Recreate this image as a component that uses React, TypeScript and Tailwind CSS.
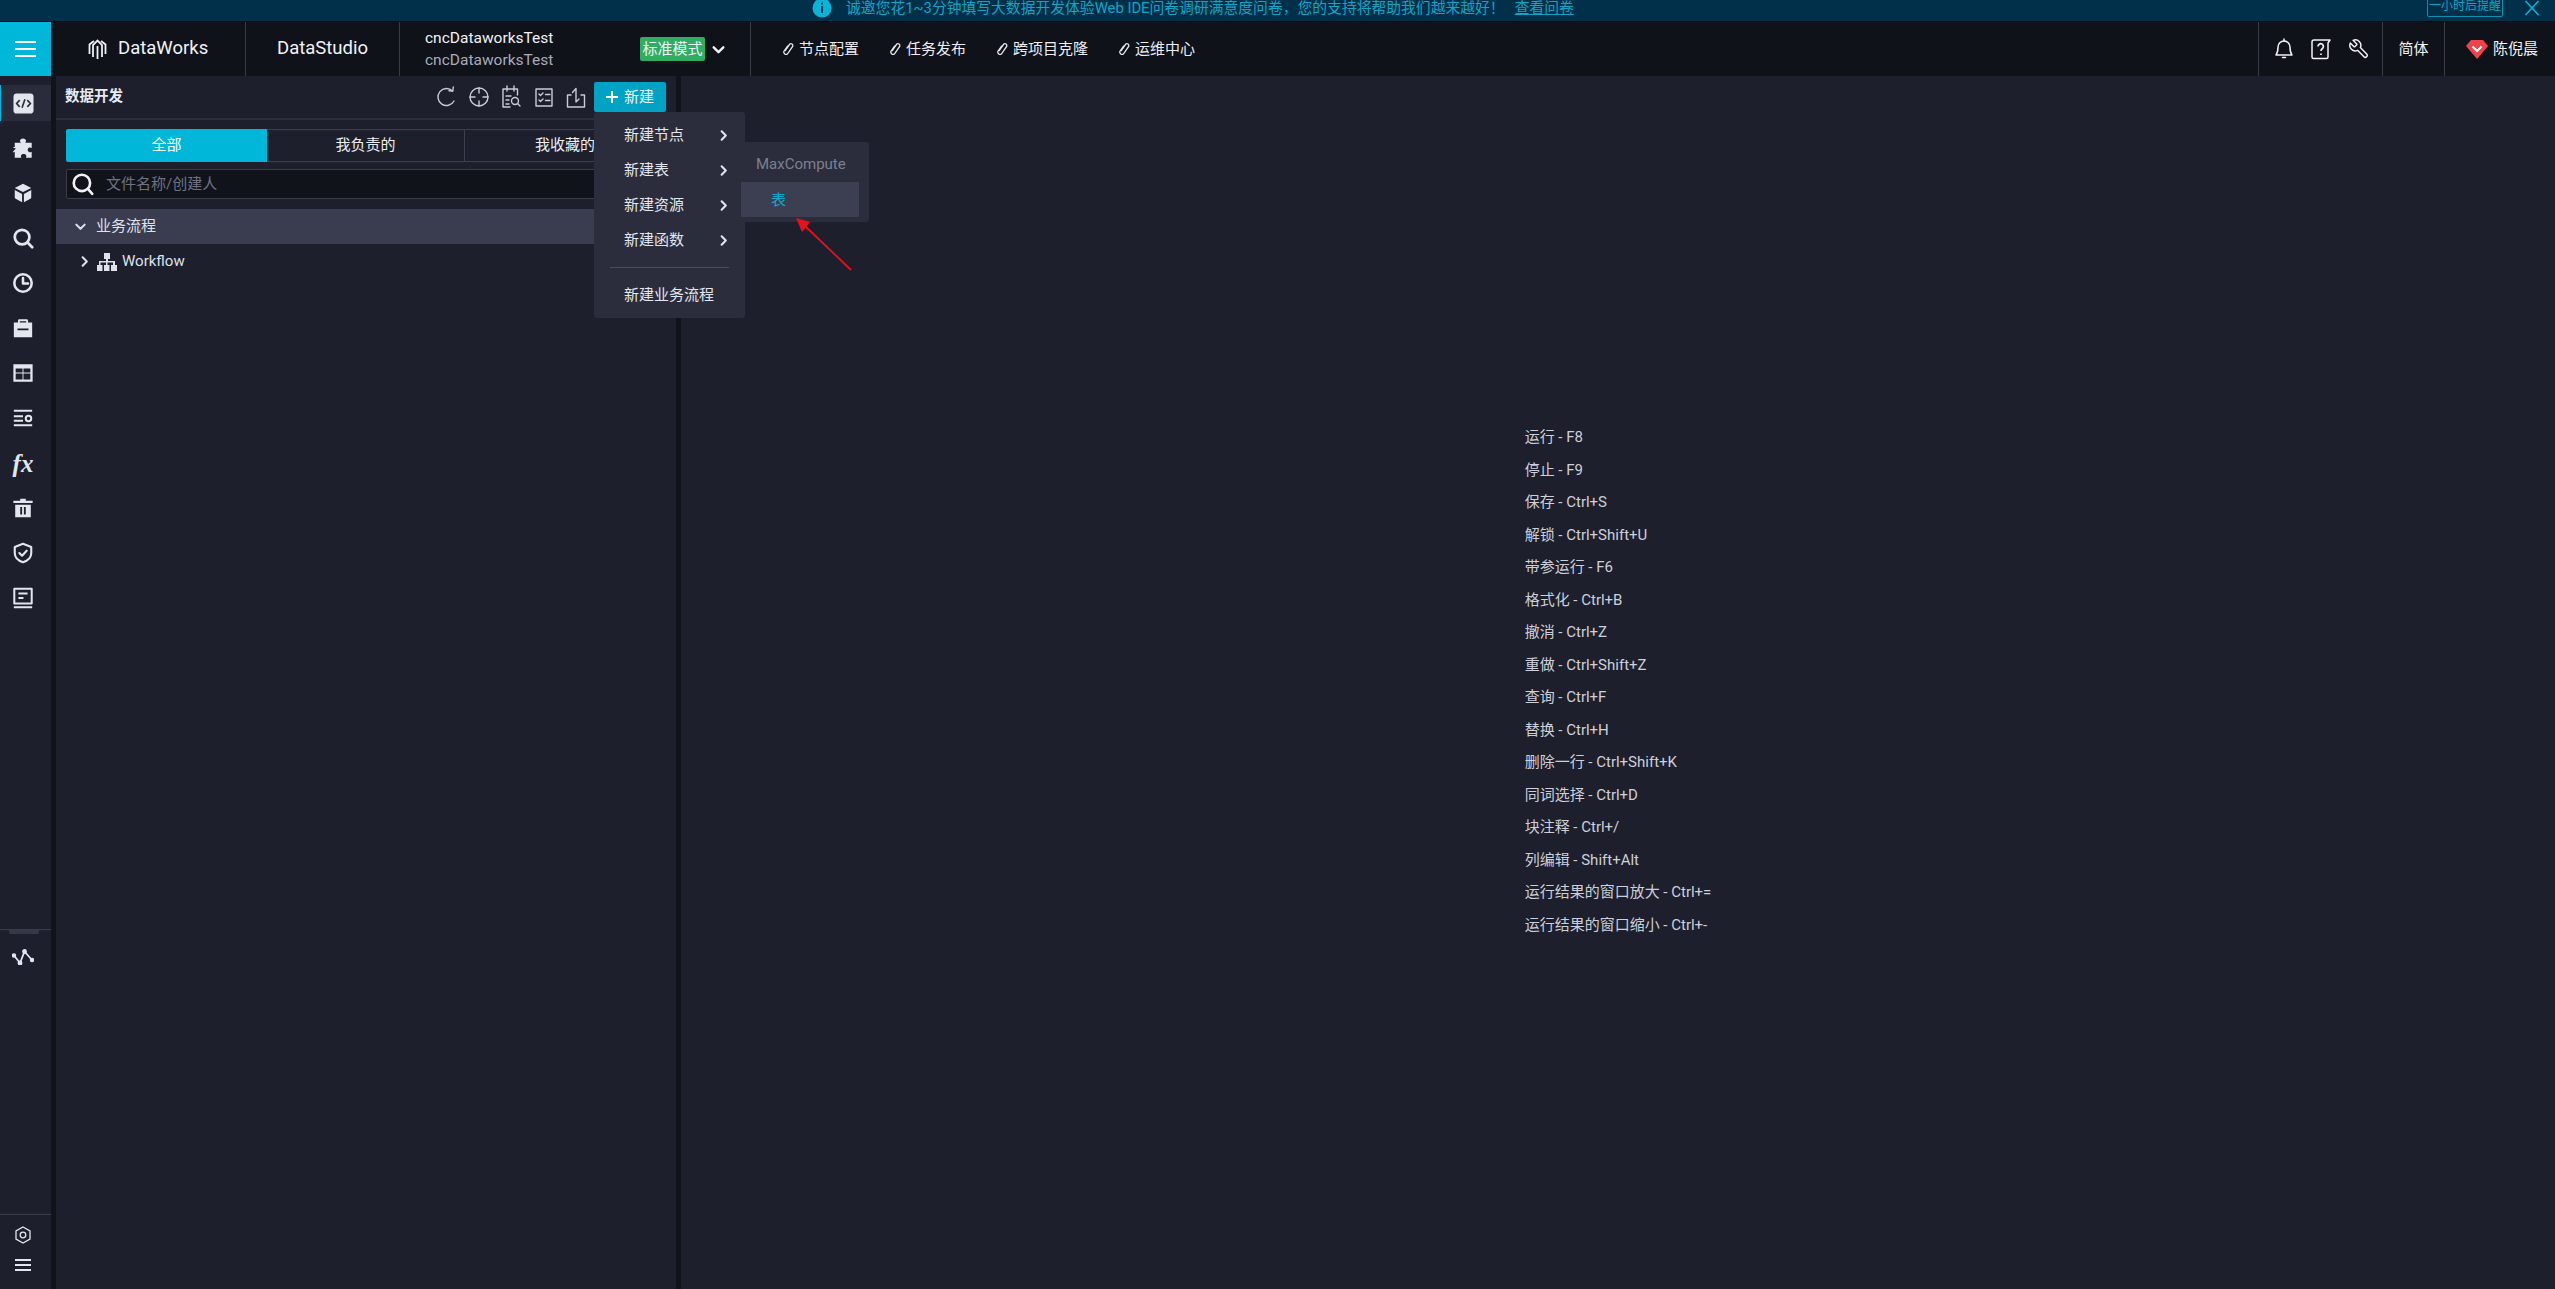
import React from "react";

const C = "#e3e6ee";

function Sb({ children, active }: { children: React.ReactNode; active?: boolean }) {
  return (
    <div className={active ? "h-[36px] w-full flex items-center justify-center bg-[#2a2c3b] border-l border-[#00b7d9] my-[4.5px] pr-[5px]" : "h-[36px] w-full flex items-center justify-center my-[4.5px] pr-[5px]"}>
      {children}
    </div>
  );
}

function Ic({ children, s = 22, sw = 0 }: { children: React.ReactNode; s?: number; sw?: number }) {
  return (
    <svg width={s} height={s} viewBox="0 0 24 24" fill={sw ? "none" : C} stroke={sw ? C : "none"} strokeWidth={sw} strokeLinecap="round" strokeLinejoin="round">
      {children}
    </svg>
  );
}

function LinkIcon() {
  return (
    <svg width="13" height="16" viewBox="0 0 13 16" fill="none" stroke="#e8eaf0" strokeWidth="1.3" strokeLinecap="round">
      <path d="M3.2 9.5 7.8 3a2 2 0 0 1 3 2.2L5.4 13a2.4 2.4 0 0 1-3.6-2.6L5.6 5" />
    </svg>
  );
}

function NavLink({ label, ml }: { label: string; ml: string }) {
  return (
    <div className={"flex items-center gap-[4px] text-[15px] text-[#eceef4] " + ml}>
      <LinkIcon />
      <span>{label}</span>
    </div>
  );
}

function Chev({ color = "#e3e6ee", dir = "r", s = 14 }: { color?: string; dir?: "r" | "d"; s?: number }) {
  return (
    <svg width={s} height={s} viewBox="0 0 14 14" fill="none" stroke={color} strokeWidth="2.2" strokeLinecap="round" strokeLinejoin="round">
      {dir === "r" ? <path d="M5 2.5 9.5 7 5 11.5" /> : <path d="M2.5 5 7 9.5 11.5 5" />}
    </svg>
  );
}

function TB({ children }: { children: React.ReactNode }) {
  return (
    <svg width="22" height="26" viewBox="0 0 22 26" fill="none" stroke="#c9ccd6" strokeWidth="1.4" strokeLinecap="round" strokeLinejoin="round">
      {children}
    </svg>
  );
}

function MenuItem({ label }: { label: string }) {
  return (
    <div className="h-[35px] flex items-center pl-[30px] pr-[15px] justify-between text-[15px] text-[#e3e6ee]">
      <span>{label}</span>
      <Chev s={13} />
    </div>
  );
}

const shortcuts = [
  "运行 - F8",
  "停止 - F9",
  "保存 - Ctrl+S",
  "解锁 - Ctrl+Shift+U",
  "带参运行 - F6",
  "格式化 - Ctrl+B",
  "撤消 - Ctrl+Z",
  "重做 - Ctrl+Shift+Z",
  "查询 - Ctrl+F",
  "替换 - Ctrl+H",
  "删除一行 - Ctrl+Shift+K",
  "同词选择 - Ctrl+D",
  "块注释 - Ctrl+/",
  "列编辑 - Shift+Alt",
  "运行结果的窗口放大 - Ctrl+=",
  "运行结果的窗口缩小 - Ctrl+-",
];

export default function App() {
  return (
    <div className="relative h-screen w-screen overflow-hidden flex flex-col bg-[#1d1f2c] font-['Roboto','Noto_Sans_CJK_SC',sans-serif]">
      {/* Banner */}
      <div className="h-[22px] shrink-0 overflow-hidden flex items-start bg-[#00304a] border-b border-[#05070c] pl-[812px] text-[14.8px] text-[#12a4c6]">
        <svg width="20" height="20" viewBox="0 0 20 20" className="-mt-[2px] shrink-0">
          <circle cx="10" cy="10" r="9.5" fill="#08b4d8" />
          <rect x="9" y="8" width="2" height="7" fill="#00304a" />
          <rect x="9" y="4.5" width="2" height="2" fill="#00304a" />
        </svg>
        <span className="ml-[14px] leading-[16px] whitespace-nowrap">诚邀您花1~3分钟填写大数据开发体验Web IDE问卷调研满意度问卷，您的支持将帮助我们越来越好！</span>
        <span className="ml-[10px] leading-[16px] underline whitespace-nowrap">查看问卷</span>
        <div className="ml-auto mr-[52px] -mt-[6px] w-[76px] h-[23px] border border-[#0f8fae] rounded-[2px] flex items-center justify-center text-[12px] text-[#12a4c6] whitespace-nowrap">一小时后提醒</div>
        <svg width="16" height="16" viewBox="0 0 16 16" className="absolute left-[2524px] top-0" stroke="#12b2d4" strokeWidth="1.6" fill="none">
          <path d="M1.5 1 14.5 15M14.5 1 1.5 15" />
        </svg>
      </div>

      {/* Header */}
      <div className="h-[54px] shrink-0 flex items-stretch bg-[#10121a] text-[#f0f2f6]">
        <div className="w-[51px] bg-[#00b7d9] flex items-center justify-center">
          <svg width="21" height="18" viewBox="0 0 21 18" stroke="#fff" strokeWidth="2.2">
            <path d="M0 2h21M0 9h21M0 16h21" />
          </svg>
        </div>
        <div className="w-[195px] flex items-center pl-[37px] border-r border-[#3a3c48]">
          <svg width="19" height="24" viewBox="0 0 19 24" fill="none" stroke="#eef0f4" strokeWidth="1.8">
            <path d="M1.5 17V7.500L6 4" />
            <path d="M5 20V8l4.500-4.500L14 8v12" />
            <path d="M9.500 22V9" />
            <path d="M13 4l4.500 3.500V17" />
          </svg>
          <span className="ml-[11px] text-[18.5px] whitespace-nowrap">DataWorks</span>
        </div>
        <div className="w-[154px] flex items-center pl-[31px] border-r border-[#3a3c48]">
          <span className="text-[18.5px] whitespace-nowrap">DataStudio</span>
        </div>
        <div className="w-[351px] flex items-center pl-[25px] border-r border-[#3a3c48]">
          <div className="w-[215px] flex flex-col gap-[3px] text-[15.5px] leading-[19px]">
            <span className="text-[#f0f2f6]">cncDataworksTest</span>
            <span className="text-[#a8abb8]">cncDataworksTest</span>
          </div>
          <div className="w-[65px] h-[24px] rounded-[2px] bg-[#2fae63] flex items-center justify-center text-[15px] text-[#f0f2f6]">标准模式</div>
          <div className="ml-[6px]"><Chev s={15} dir="d" color="#f0f2f6" /></div>
        </div>
        <div className="flex-1 flex items-center">
          <NavLink label="节点配置" ml="ml-[31px]" />
          <NavLink label="任务发布" ml="ml-[30px]" />
          <NavLink label="跨项目克隆" ml="ml-[30px]" />
          <NavLink label="运维中心" ml="ml-[30px]" />
        </div>
        <div className="w-[124px] shrink-0 flex items-center border-l border-[#3a3c48]">
          <svg width="22" height="24" viewBox="0 0 22 24" fill="none" stroke="#f0f2f6" strokeWidth="1.5" strokeLinejoin="round" className="ml-[14px]">
            <path d="M3 18c1.5-2 2-3 2-8a6 6 0 0 1 12 0c0 5 .5 6 2 8z" />
            <path d="M11 2v2M9.5 20.5h3" strokeLinecap="round" />
          </svg>
          <svg width="22" height="22" viewBox="0 0 22 22" fill="none" stroke="#f0f2f6" strokeWidth="1.5" strokeLinejoin="round" className="ml-[15px]">
            <path d="M4 2h16l-2 3v14a1.5 1.5 0 0 1-1.500 1.500H3.500A1.500 1.500 0 0 1 2 19V4a2 2 0 0 1 2-2z" />
            <path d="M8 8.500a2.700 2.700 0 1 1 4.200 2.200c-1 .7-1.200 1.200-1.200 2.300M11 15.500v1.500" strokeWidth="1.700" />
          </svg>
          <svg width="22" height="22" viewBox="0 0 24 24" fill="none" stroke="#f0f2f6" strokeWidth="1.6" strokeLinejoin="round" strokeLinecap="round" className="ml-[16px]">
            <path transform="translate(24 0) scale(-1 1)" d="M14.7 6.3a1 1 0 0 0 0 1.400l1.600 1.600a1 1 0 0 0 1.400 0l3.770-3.770a6 6 0 0 1-7.940 7.940l-6.910 6.910a2.120 2.120 0 0 1-3-3l6.910-6.910a6 6 0 0 1 7.940-7.940l-3.760 3.760z" />
          </svg>
        </div>
        <div className="w-[62px] shrink-0 flex items-center justify-center border-l border-[#3a3c48] text-[15px]">简体</div>
        <div className="w-[111px] shrink-0 flex items-center border-l border-[#3a3c48] pl-[21px]">
          <svg width="22" height="20" viewBox="0 0 22 20">
            <path d="M5 1h12l5 6-11 13L0 7z" fill="#ef4249" />
            <path d="M6.500 7.500 11 12l4.500-4.500" fill="none" stroke="#fff" strokeWidth="2.200" />
          </svg>
          <span className="ml-[5px] text-[15px] whitespace-nowrap">陈倪晨</span>
        </div>
      </div>

      {/* Body */}
      <div className="flex-1 flex min-h-0">
        {/* Icon rail */}
        <div className="w-[51px] shrink-0 flex flex-col">
          <div className="h-[4.500px] shrink-0" />
          <Sb active>
            <svg width="21" height="21" viewBox="0 0 22 22">
              <rect x="0.500" y="0.500" width="21" height="21" rx="3.500" fill={C} />
              <path d="M7 7.500 3.800 11 7 14.500M15 7.500l3.200 3.500-3.200 3.500M12.500 6.500 9.500 15.500" fill="none" stroke="#2a2c3b" strokeWidth="1.700" />
            </svg>
          </Sb>
          <Sb>
            <Ic>
              <path d="M9.500 6.200C8.800 5.200 8.600 4.500 8.800 3.600 9.100 2.400 10.400 1.500 12 1.500s2.900.9 3.200 2.100c.2.900 0 1.600-.7 2.600h7V12c-.9-.6-1.600-.8-2.400-.6-1.200.3-2 1.400-2 2.600s.8 2.300 2 2.600c.8.200 1.500 0 2.400-.6v6.500h-6.300c.5-.9.600-1.500.4-2.200-.3-1.100-1.400-1.800-2.900-1.800s-2.600.7-2.900 1.800c-.2.700-.1 1.300.4 2.200H3v-6.500c-.9.600-1.600.8-2.400.6z" />
              <path d="M1 11.500c.8-.5 1.400-.6 2-.5V6.200h6.500L8 14z" />
            </Ic>
          </Sb>
          <Sb>
            <Ic>
              <path d="M12 2 21 6.500 12 11 3 6.500z" />
              <path d="M3 8.800 11 13v9l-7-3.700A2 2 0 0 1 3 16.500zM21 8.800 13 13v9l7-3.700a2 2 0 0 0 1-1.800z" />
            </Ic>
          </Sb>
          <Sb>
            <Ic sw={3}>
              <circle cx="11" cy="11" r="8" />
              <path d="M17 17l5 5" />
            </Ic>
          </Sb>
          <Sb>
            <Ic sw={2.800}>
              <circle cx="12" cy="12" r="9.500" />
              <path d="M12 6.500V12.500H17.500" />
            </Ic>
          </Sb>
          <Sb>
            <Ic>
              <path d="M8 2.500h8a1.500 1.500 0 0 1 1.500 1.500v2H22v16H2V6h4.500V4A1.500 1.500 0 0 1 8 2.500zM8.500 4.500V6h7V4.500zM6 12.500v2h12v-2z" fillRule="evenodd" />
            </Ic>
          </Sb>
          <Sb>
            <Ic>
              <path d="M1.500 2.500h21v19h-21zM4 7v4.500h7.500V7zm8.500 0v4.500H20V7zM4 12.500V19h7.500v-6.500zm8.500 0V19H20v-6.500z" fillRule="evenodd" />
            </Ic>
          </Sb>
          <Sb>
            <Ic sw={2.200}>
              <path d="M2 4h20M2 10h10M2 15h10M2 20h20" strokeLinecap="butt" />
              <circle cx="18" cy="12.500" r="3" />
            </Ic>
          </Sb>
          <Sb>
            <span className="font-['Liberation_Serif',serif] italic font-bold text-[25px] leading-none text-[#e3e6ee]">fx</span>
          </Sb>
          <Sb>
            <Ic>
              <path d="M9 2h6v2h7.500v2.500h-21V4H9zM3.500 8.500h17V22h-17zM9 11v8h2v-8zm4 0v8h2v-8z" fillRule="evenodd" />
            </Ic>
          </Sb>
          <Sb>
            <Ic sw={2.300}>
              <path d="M12 2 21 5.500V12c0 5-4 8.500-9 10-5-1.500-9-5-9-10V5.500z" />
              <path d="M8 12l3 3 5-5.500" />
            </Ic>
          </Sb>
          <Sb>
            <Ic sw={2.200}>
              <path d="M2.500 2h19v16h-19zM7 7h10M7 12h5.500M2 22h20" strokeLinecap="butt" />
            </Ic>
          </Sb>
          <div className="flex-1" />
          <div className="relative h-[54px] shrink-0 border-t border-[#3a3c48] flex items-center justify-center pr-[5px]">
            <div className="absolute left-[9px] top-0 w-[30px] h-[4px] bg-[#363847] rounded-b-[2px]" />
            <svg width="22" height="16" viewBox="0 0 22 16" fill="none" stroke="#dfe6f4" strokeWidth="1.800" strokeLinejoin="round">
              <path d="M2 6.500 8 14 12.500 2.500 20 11" />
              <circle cx="2" cy="6.500" r="1.300" fill="#dfe6f4" />
              <circle cx="8" cy="14" r="1.500" fill="#dfe6f4" />
              <circle cx="12.500" cy="2.500" r="1.500" fill="#dfe6f4" />
              <circle cx="20" cy="11" r="1.300" fill="#dfe6f4" />
            </svg>
          </div>
          <div className="h-[231px] shrink-0" />
          <div className="h-[75px] shrink-0 border-t border-[#3a3c48] flex flex-col items-center pt-[3px] pr-[5px]">
            <svg width="18" height="18" viewBox="0 0 18 18" fill="none" stroke={C} strokeWidth="1.300" className="mt-[8px]">
              <path d="M9 1 16 5v8l-7 4-7-4V5z" />
              <circle cx="9" cy="9" r="2.800" />
            </svg>
            <svg width="16" height="14" viewBox="0 0 16 14" stroke={C} strokeWidth="1.800" className="mt-[14px]">
              <path d="M0 2h16M0 7h16M0 12h16" />
            </svg>
          </div>
        </div>

        {/* Dark gutter */}
        <div className="w-[5px] shrink-0 bg-[#11131b]" />

        {/* Panel */}
        <div className="relative w-[620px] shrink-0 flex flex-col">
          <div className="h-[44px] shrink-0 flex items-center pl-[9px] pr-[10px] border-b-2 border-[#2c2e3c]">
            <span className="text-[14.500px] font-bold text-[#e8eaf0]">数据开发</span>
            <div className="ml-auto flex items-center gap-[10.500px]">
              <TB>
                <path d="M17.500 7A8.500 8.500 0 1 0 19 17" />
                <path d="M14 6.800 17.800 7 18.300 3" />
              </TB>
              <TB>
                <circle cx="11" cy="13" r="9" />
                <path d="M11 4v5M11 17v5M2 13h5M15 13h5" />
              </TB>
              <TB>
                <path d="M17.500 11V5H3v18h7" />
                <path d="M7 2v5M14 2v5M6 12h5M6 16h3M6 20h3" />
                <circle cx="15" cy="17" r="3.500" />
                <path d="M17.500 19.500 20 22" />
              </TB>
              <TB>
                <path d="M3 5h16v17H3z" />
                <path d="M6 10l1.500 1.500L10 9M6 16l1.500 1.500L10 15M12.500 10.500H17M12.500 16.500H17" />
              </TB>
              <TB>
                <path d="M6 11H2.500v12h17V11H16" />
                <path d="M11 18V4.500L7.500 8.500M11 18l3-3" />
              </TB>
            </div>
            <div className="ml-[7px] w-[72px] h-[30px] rounded-[2px] bg-[#00a3c4] flex items-center justify-center gap-[6px] text-[15px] text-[#f0f3f6]">
              <svg width="12" height="12" viewBox="0 0 12 12" stroke="#fff" strokeWidth="2"><path d="M6 0v12M0 6h12" /></svg>
              <span>新建</span>
            </div>
          </div>

          <div className="mt-[9px] mx-[10px] h-[33px] flex shrink-0 text-[15px] text-[#eceef4]">
            <div className="w-[201px] rounded-l-[2px] bg-[#00b7d9] flex items-center justify-center text-white">全部</div>
            <div className="w-[198px] border-y border-r border-[#3d3f4e] flex items-center justify-center">我负责的</div>
            <div className="flex-1 border-y border-r border-[#3d3f4e] flex items-center justify-center">我收藏的</div>
          </div>

          <div className="mt-[7px] mx-[10px] h-[30px] shrink-0 flex items-center bg-[#11131b] border border-[#3a3c4a] rounded-[2px] pl-[4px]">
            <svg width="24" height="24" viewBox="0 0 22 22" fill="none" stroke="#f0f2f6" strokeWidth="2.400" strokeLinecap="round">
              <circle cx="10" cy="10" r="7.500" />
              <path d="M15.500 15.500 19.500 20" />
            </svg>
            <span className="ml-[11px] text-[15px] text-[#6f7282]">文件名称/创建人</span>
          </div>

          <div className="mt-[10px] h-[35px] shrink-0 bg-[#3a3c4f] flex items-center pl-[18px] text-[15px] text-[#dfe2ea]">
            <Chev s={13} dir="d" color="#dfe2ea" />
            <span className="ml-[9px]">业务流程</span>
          </div>

          <div className="h-[35px] shrink-0 flex items-center pl-[22px] text-[15px] text-[#dfe2ea]">
            <Chev s={13} color="#dfe2ea" />
            <svg width="20" height="18" viewBox="0 0 20 18" fill="#dfe2ea" className="ml-[6px]">
              <path d="M7 0h6v6h-2v2h7v4h2v6h-6v-6h2V9.500h-5.500V12h2v6H7v-6h2V9.500H3.500V12h2v6H0v-6h2V8h7V6H7z" />
            </svg>
            <span className="ml-[5px]">Workflow</span>
          </div>

          {/* Dropdown */}
          <div className="absolute left-[538px] top-[36px] w-[151px] h-[206px] bg-[#2b2d3c] rounded-[3px] pt-[6px] z-10">
            <MenuItem label="新建节点" />
            <MenuItem label="新建表" />
            <MenuItem label="新建资源" />
            <MenuItem label="新建函数" />
            <div className="mt-[9px] mb-[10px] mx-[16px] border-t border-[#4a4c5c]" />
            <div className="h-[35px] flex items-center pl-[30px] text-[15px] text-[#e3e6ee]">新建业务流程</div>

            <div className="absolute left-[147px] top-[30px] w-[128px] h-[80px] bg-[#2b2d3c] rounded-[3px] pt-[5px]">
              <div className="h-[35px] flex items-center pl-[15px] text-[15px] text-[#7d808f]">MaxCompute</div>
              <div className="w-[118px] h-[35px] bg-[#3c3f51] flex items-center pl-[30px] pt-[1px] text-[15px] text-[#10a9c9]">表</div>
            </div>
          </div>
        </div>

        {/* Separator */}
        <div className="w-[5px] shrink-0 bg-[#11131b]" />

        {/* Main */}
        <div className="flex-1 flex items-center justify-center pb-[3px]">
          <div className="flex flex-col text-[15px] text-[#cdd0da]">
            {shortcuts.map((s) => (
              <div key={s} className="h-[32.500px] flex items-center whitespace-nowrap">{s}</div>
            ))}
          </div>
        </div>
      </div>

      {/* Red annotation arrow */}
      <svg className="absolute left-[790px] top-[212px] z-20" width="70" height="64" viewBox="0 0 70 64" fill="none">
        <path d="M61 58 14 13" stroke="#e8111a" strokeWidth="1.800" />
        <path d="M6 6 20 10 12 20z" fill="#e8111a" />
      </svg>
    </div>
  );
}
